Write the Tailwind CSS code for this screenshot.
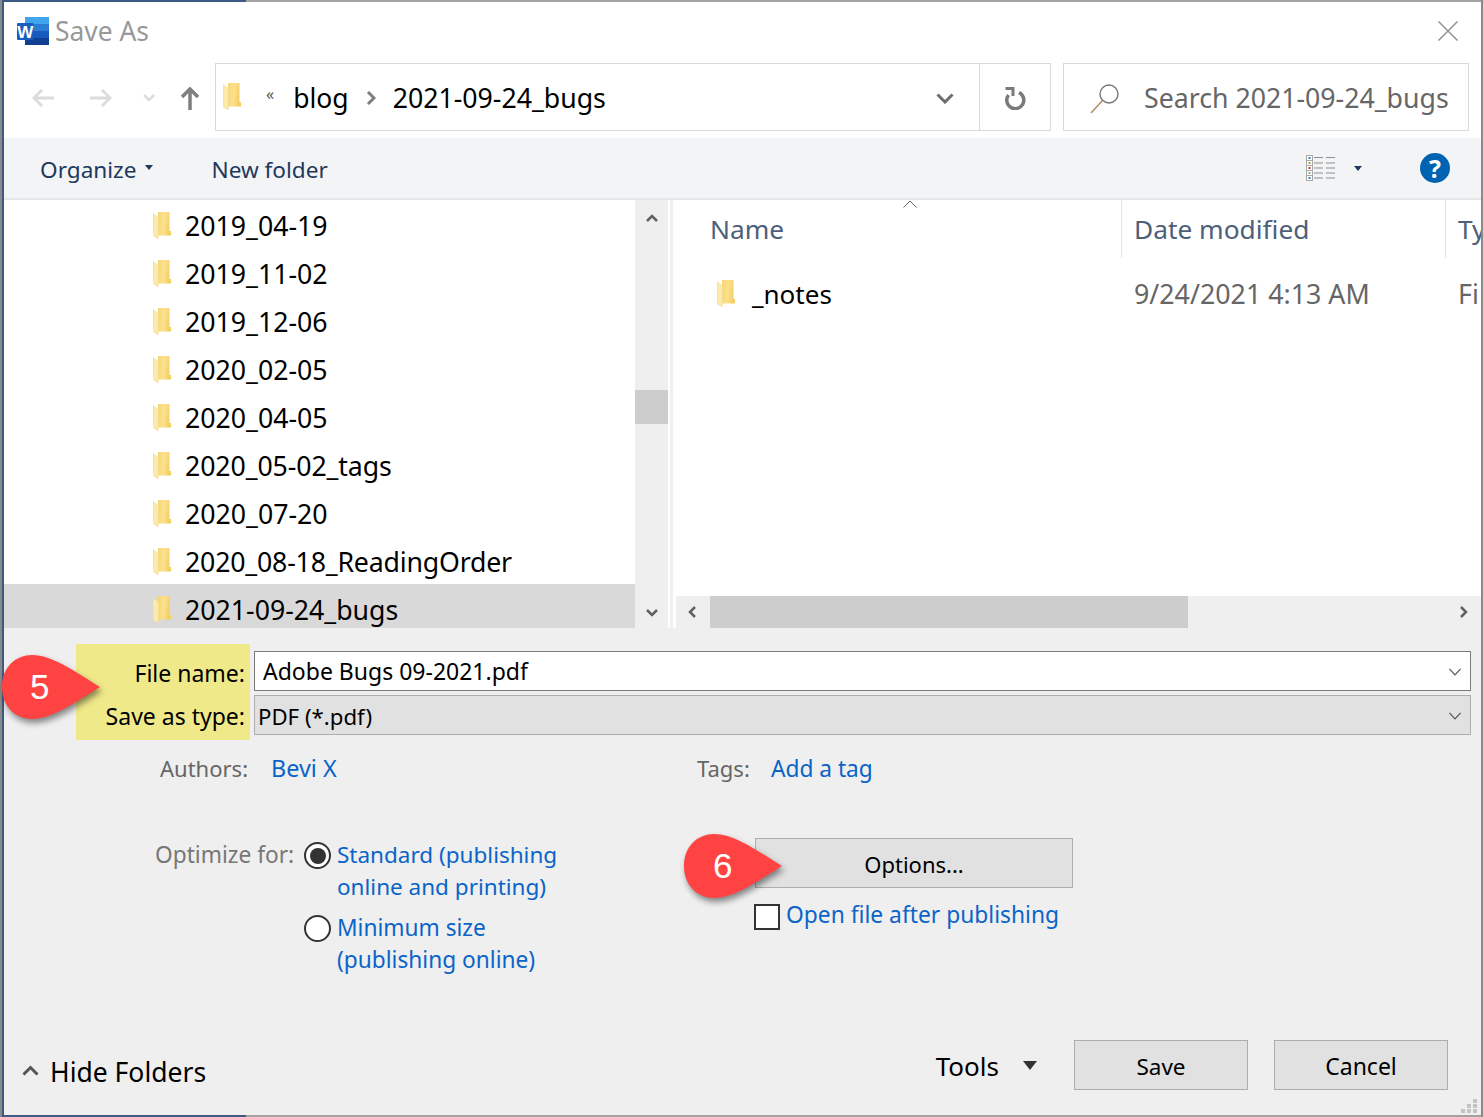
<!DOCTYPE html>
<html lang="en">
<head>
<meta charset="UTF-8">
<title>Save As</title>
<script src="https://cdn.jsdelivr.net/npm/@tailwindcss/browser@4"></script>
</head>
<body class="bg-white">
<svg class="absolute w-0 h-0" width="0" height="0">
  <defs>
    <linearGradient id="fold" x1="0" y1="0" x2="1" y2="0.2">
      <stop offset="0" stop-color="#f8d775"/><stop offset="0.55" stop-color="#fbe08d"/><stop offset="1" stop-color="#f5cd62"/>
    </linearGradient>
    <symbol id="folder" viewBox="0 0 18 27">
      <path d="M5 0H16.500V19H18V23.500H5Z" fill="url(#fold)"/>
      <path d="M0 1.500L5.500 6V23.500L5 27L0 23.500Z" fill="#fdeaa8" stroke="#edd58f" stroke-width="0.5"/>
    </symbol>
    <symbol id="chev-down" viewBox="0 0 16 10"><path d="M1 1L8 8.500L15 1" fill="none" stroke="currentColor" stroke-width="1.500"/></symbol>
  </defs>
</svg>

<div class="relative w-[1483px] h-[1117px] overflow-hidden bg-[#8a8a8a] font-['Noto_Sans',sans-serif] pl-[2px] pr-[2px]">
  <div class="flex flex-col h-full border-l-2 border-[#3d5a85] bg-[#efefef]">
    <!-- top edge -->
    <div class="flex h-[2px] shrink-0"><div class="w-[242px] bg-[#3d5a85]"></div><div class="flex-1 bg-[#a3a3a3]"></div></div>

    <!-- title bar -->
    <div class="flex items-center h-[60px] shrink-0 bg-white pl-[13px] pr-[23px]">
      <svg class="w-[32px] h-[28px] -mt-[2px]" viewBox="0 0 32 28">
        <rect x="8" width="24" height="7" fill="#41a5ee"/>
        <rect x="8" y="7" width="24" height="7" fill="#2b7cd3"/>
        <rect x="8" y="14" width="24" height="7" fill="#185abd"/>
        <rect x="8" y="21" width="24" height="7" fill="#103f91"/>
        <rect y="6" width="16.500" height="17" rx="1" fill="#1a5dbd"/>
        <text x="8.250" y="20.500" font-size="17" font-weight="700" text-anchor="middle" fill="#fff" font-family="Liberation Sans">W</text>
      </svg>
      <span class="ml-[6px] -mt-[2px] text-[26.400px] text-[#999] leading-none">Save As</span>
      <svg class="ml-auto -mt-[2px] w-[20px] h-[20px]" viewBox="0 0 20 20"><path d="M0.500 0.500L19.500 19.500M19.500 0.500L0.500 19.500" stroke="#8c8c8c" stroke-width="1.400"/></svg>
    </div>

    <!-- nav row -->
    <div class="flex items-start h-[76px] shrink-0 bg-white">
      <div class="flex items-center h-[72px] w-[211px] shrink-0 pl-[28px]">
        <svg class="w-[22px] h-[18px]" viewBox="0 0 22 18"><path d="M22 9H2M10 1L2 9L10 17" fill="none" stroke="#dcdcdc" stroke-width="3"/></svg>
        <svg class="ml-[36px] w-[22px] h-[18px]" viewBox="0 0 22 18"><path d="M0 9H20M12 1L20 9L12 17" fill="none" stroke="#dcdcdc" stroke-width="3"/></svg>
        <svg class="ml-[31px] w-[12px] h-[8px]" viewBox="0 0 12 8"><path d="M1 1L6 6L11 1" fill="none" stroke="#dcdcdc" stroke-width="2.500"/></svg>
        <svg class="ml-[26px] w-[18px] h-[23px]" viewBox="0 0 18 23"><path d="M9 23V3M1 10L9 2L17 10" fill="none" stroke="#7f7f7f" stroke-width="3.500"/></svg>
      </div>
      <div class="flex items-center w-[836px] h-[68px] border border-[#d9d9d9] mt-px shrink-0">
        <svg class="ml-[7px] -mt-[1px] w-[18px] h-[27px]"><use href="#folder"/></svg>
        <span class="ml-[25px] text-[16px] leading-none text-[#555] -mt-[6px]">«</span>
        <span class="ml-[19px] mt-[2px] text-[26.500px] text-black leading-none">blog</span>
        <svg class="ml-[17px] w-[10px] h-[14px] mt-[2px]" viewBox="0 0 10 14"><path d="M2 1L8 7L2 13" fill="none" stroke="#7f7f7f" stroke-width="3"/></svg>
        <span class="ml-[17px] mt-[2px] text-[26.700px] text-black leading-none">2021-09-24_bugs</span>
        <svg class="ml-auto mt-[2px] w-[18px] h-[11px] text-[#6d6d6d]" viewBox="0 0 18 11"><path d="M1.500 1.500L9 9L16.500 1.500" fill="none" stroke="currentColor" stroke-width="3"/></svg>
        <div class="flex items-center justify-center ml-[25px] w-[71px] h-full border-l border-[#d9d9d9]">
          <svg class="w-[22px] h-[24px] mt-[1px]" viewBox="0 0 22 24"><path d="M15 6.500A8.500 8.500 0 1 1 4.500 9" fill="none" stroke="#7a7a7a" stroke-width="3.500"/><path d="M1.500 2.500H9V10" fill="none" stroke="#7a7a7a" stroke-width="3"/></svg>
        </div>
      </div>
      <div class="flex items-center ml-[12px] w-[406px] h-[68px] border border-[#d9d9d9] mt-px shrink-0">
        <svg class="ml-[26px] w-[30px] h-[31px] mt-[2px]" viewBox="0 0 30 31"><circle cx="19" cy="11" r="9" fill="none" stroke="#777" stroke-width="1.400"/><path d="M12.500 17.500L1 30" stroke="#b08d66" stroke-width="1.500"/></svg>
        <span class="ml-[24px] mt-[3px] text-[26.700px] text-[#666] leading-none whitespace-nowrap">Search 2021-09-24_bugs</span>
      </div>
    </div>

    <!-- toolbar -->
    <div class="flex items-center h-[62px] shrink-0 bg-[#f3f4f6] border-b-2 border-[#e6e6e6] pl-[36px] text-[22.600px] text-[#1e395b] leading-none">
      <span class="mt-[4px]">Organize</span>
      <svg class="ml-[9px] w-[8px] h-[5px] -mt-[2px]" viewBox="0 0 8 5"><path d="M0 0H8L4 5Z" fill="#1e395b"/></svg>
      <span class="ml-[58px] mt-[4px]">New folder</span>
      <svg class="ml-auto w-[30px] h-[27px]" viewBox="0 0 30 27">
        <g fill="#fff" stroke="#a8a8a8"><rect x="0.500" y="0.500" width="6" height="5"/><rect x="0.500" y="5.500" width="6" height="5"/><rect x="0.500" y="10.500" width="6" height="5"/><rect x="0.500" y="15.500" width="6" height="5"/><rect x="0.500" y="20.500" width="6" height="5"/></g>
        <rect x="2.500" y="2" width="2" height="2" fill="#3b7fc4"/><rect x="2.500" y="7" width="2" height="2" fill="#a89a3a"/><rect x="2.500" y="12" width="2" height="2" fill="#c0392b"/><rect x="2.500" y="17" width="2" height="2" fill="#9a9a9a"/><rect x="2.500" y="22" width="2" height="2" fill="#3b7fc4"/>
        <path d="M8 2.500H17M20 2.500H29M8 8H17M20 8H29M8 13H17M20 13H29M8 18H17M20 18H29M8 23H17M20 23H29" stroke="#8f8f8f"/>
      </svg>
      <svg class="ml-[18px] w-[8px] h-[5px]" viewBox="0 0 8 5"><path d="M0 0H8L4 5Z" fill="#1e395b"/></svg>
      <div class="flex items-center justify-center ml-[58px] mr-[31px] w-[30px] h-[30px] rounded-full bg-[#0063b1] text-white text-[25px] font-bold">?</div>
    </div>

    <!-- panes -->
    <div class="flex h-[428px] shrink-0 bg-white">
      <div class="w-[631px] shrink-0 overflow-hidden pt-[2px] text-[26.700px] text-black">
        <div class="flex items-center h-[48px] pl-[149px]"><svg class="w-[18px] h-[27px] -mt-[2px]"><use href="#folder"/></svg><span class="ml-[14px]">2019_04-19</span></div>
        <div class="flex items-center h-[48px] pl-[149px]"><svg class="w-[18px] h-[27px] -mt-[2px]"><use href="#folder"/></svg><span class="ml-[14px]">2019_11-02</span></div>
        <div class="flex items-center h-[48px] pl-[149px]"><svg class="w-[18px] h-[27px] -mt-[2px]"><use href="#folder"/></svg><span class="ml-[14px]">2019_12-06</span></div>
        <div class="flex items-center h-[48px] pl-[149px]"><svg class="w-[18px] h-[27px] -mt-[2px]"><use href="#folder"/></svg><span class="ml-[14px]">2020_02-05</span></div>
        <div class="flex items-center h-[48px] pl-[149px]"><svg class="w-[18px] h-[27px] -mt-[2px]"><use href="#folder"/></svg><span class="ml-[14px]">2020_04-05</span></div>
        <div class="flex items-center h-[48px] pl-[149px]"><svg class="w-[18px] h-[27px] -mt-[2px]"><use href="#folder"/></svg><span class="ml-[14px] tracking-[-0.100px]">2020_05-02_tags</span></div>
        <div class="flex items-center h-[48px] pl-[149px]"><svg class="w-[18px] h-[27px] -mt-[2px]"><use href="#folder"/></svg><span class="ml-[14px]">2020_07-20</span></div>
        <div class="flex items-center h-[48px] pl-[149px]"><svg class="w-[18px] h-[27px] -mt-[2px]"><use href="#folder"/></svg><span class="ml-[14px] tracking-[-0.180px]">2020_08-18_ReadingOrder</span></div>
        <div class="flex items-center h-[52px] -mt-[2px] pl-[149px] bg-[#d9d9d9]"><svg class="w-[18px] h-[27px] -mt-[2px]"><use href="#folder"/></svg><span class="ml-[14px]">2021-09-24_bugs</span></div>
      </div>
      <!-- tree scrollbar -->
      <div class="flex flex-col w-[33px] shrink-0 bg-[#efefef]">
        <div class="flex items-center justify-center h-[36px]"><svg class="w-[12px] h-[8px]" viewBox="0 0 12 8"><path d="M1 7L6 2L11 7" fill="none" stroke="#606060" stroke-width="2.500"/></svg></div>
        <div class="mt-[154px] h-[34px] bg-[#cdcdcd]"></div>
        <div class="flex items-center justify-center mt-auto h-[30px]"><svg class="w-[12px] h-[8px]" viewBox="0 0 12 8"><path d="M1 1L6 6L11 1" fill="none" stroke="#606060" stroke-width="2.500"/></svg></div>
      </div>
      <div class="ml-[2px] w-[3px] shrink-0 bg-[#f0f0f0]"></div>
      <!-- file list -->
      <div class="relative flex flex-col flex-1 min-w-0 pl-[3px]">
        <svg class="absolute left-[230px] top-0 w-[14px] h-[8px]" viewBox="0 0 14 8"><path d="M0.500 7.500L7 1L13.500 7.500" fill="none" stroke="#666" stroke-width="1"/></svg>
        <div class="flex h-[58px] shrink-0 text-[26.300px] text-[#4c607a] leading-none">
          <div class="flex items-center w-[445px] pl-[34px] pt-[1px] shrink-0">Name</div>
          <div class="flex items-center w-[324px] pl-[12px] pt-[1px] shrink-0 border-l border-[#e5e5e5]">Date modified</div>
          <div class="flex items-center flex-1 pl-[12px] pt-[1px] border-l border-[#e5e5e5] overflow-hidden">Ty</div>
        </div>
        <div class="flex items-center h-[72px] shrink-0 text-[26.800px] leading-none">
          <div class="flex items-center w-[445px] pl-[41px] shrink-0"><svg class="w-[18px] h-[27px] -mt-[2px]"><use href="#folder"/></svg><span class="ml-[17px] text-black text-[26px]">_notes</span></div>
          <div class="w-[324px] pl-[13px] shrink-0 text-[#666] whitespace-nowrap">9/24/2021 4:13 AM</div>
          <div class="pl-[13px] text-[#666]">Fi</div>
        </div>
        <div class="flex items-center mt-auto h-[32px] bg-[#efefef]">
          <svg class="ml-[12px] w-[8px] h-[12px]" viewBox="0 0 8 12"><path d="M7 1L2 6L7 11" fill="none" stroke="#606060" stroke-width="2.500"/></svg>
          <div class="ml-[14px] w-[478px] h-full bg-[#cdcdcd]"></div>
          <svg class="ml-auto mr-[13px] w-[8px] h-[12px]" viewBox="0 0 8 12"><path d="M1 1L6 6L1 11" fill="none" stroke="#606060" stroke-width="2.500"/></svg>
        </div>
      </div>
    </div>

    <!-- form -->
    <div class="flex flex-col flex-1 min-h-0 bg-[#efefef]">
      <div class="flex mt-[16px] ml-[72px] mr-[10px]">
        <div class="flex flex-col w-[174px] h-[96px] bg-[#f0e98a] pr-[5px] items-end text-[23px] text-black leading-none">
          <span class="mt-[18px]">File name:</span>
          <span class="mt-[20px]">Save as type:</span>
        </div>
        <div class="flex flex-col flex-1 ml-[4px] mt-[7px] gap-[4px] text-[23px] text-black leading-none">
          <div class="flex items-center h-[40px] bg-white border border-[#7a7a7a] pl-[8px] pr-[8px] pt-[1px]">Adobe Bugs 09-2021.pdf<svg class="ml-auto w-[14px] h-[8px] text-[#555]"><use href="#chev-down"/></svg></div>
          <div class="flex items-center h-[40px] bg-[#e1e1e1] border border-[#adadad] pl-[3px] pr-[8px] pt-[4px] text-[22.200px]">PDF (*.pdf)<svg class="ml-auto -mt-[3px] w-[14px] h-[8px] text-[#555]"><use href="#chev-down"/></svg></div>
        </div>
      </div>

      <div class="flex items-center mt-[13px] h-[32px] leading-none">
        <span class="ml-[156px] w-[88px] -mt-[2px] text-[22px] text-[#666]">Authors:</span>
        <span class="ml-[23px] w-[426px] text-[23.400px] text-[#0a64c8]">Bevi X</span>
        <span class="w-[52px] -mt-[2px] text-[22px] text-[#666]">Tags:</span>
        <span class="ml-[22px] text-[22.700px] text-[#0a64c8]">Add a tag</span>
      </div>

      <div class="flex mt-[54px] text-[22.700px] leading-[32px]">
        <span class="ml-[151px] w-[140px] text-[#777] whitespace-nowrap">Optimize for:</span>
        <div class="ml-[9px] w-[380px] shrink-0 text-[#0a64c8]">
          <div class="flex gap-[6px]">
            <div class="flex items-center justify-center mt-[3px] w-[27px] h-[27px] rounded-full border-2 border-[#333] bg-white"><div class="w-[16px] h-[16px] rounded-full bg-[#333]"></div></div>
            <span class="text-[22.500px]">Standard (publishing<br>online and printing)</span>
          </div>
          <div class="flex gap-[6px] mt-[9px]">
            <div class="mt-[3px] w-[27px] h-[27px] rounded-full border-2 border-[#333] bg-white"></div>
            <span>Minimum size<br>(publishing online)</span>
          </div>
        </div>
        <div class="flex flex-col ml-[70px] -mt-[1px]">
          <div class="flex items-center justify-center pt-[2px] ml-[1px] w-[318px] h-[50px] bg-[#e1e1e1] border border-[#adadad] text-[22px] text-black">Options...</div>
          <div class="flex items-start mt-[16px]">
            <div class="w-[26px] h-[26px] border-2 border-[#333] bg-white"></div>
            <span class="ml-[6px] -mt-[2px] leading-[26px] text-[22.800px] text-[#0a64c8]">Open file after publishing</span>
          </div>
        </div>
      </div>

      <!-- footer -->
      <div class="flex items-center mt-auto mb-[25px] h-[50px] text-black">
        <svg class="ml-[18px] mt-[10px] w-[17px] h-[11px]" viewBox="0 0 17 11"><path d="M1.500 9.500L8.500 2.500L15.500 9.500" fill="none" stroke="#555" stroke-width="3"/></svg>
        <span class="ml-[11px] text-[26.500px] leading-none mt-[15px]">Hide Folders</span>
        <span class="ml-auto text-[26px] leading-none mt-[2px]">Tools</span>
        <svg class="ml-[24px] w-[14px] h-[9px]" viewBox="0 0 14 9"><path d="M0 0H14L7 9Z" fill="#333"/></svg>
        <div class="flex items-center justify-center pt-[3px] ml-[37px] w-[174px] h-[50px] bg-[#e1e1e1] border border-[#adadad] text-[22.500px]">Save</div>
        <div class="flex items-center justify-center pt-[3px] ml-[26px] mr-[33px] w-[174px] h-[50px] bg-[#e1e1e1] border border-[#adadad] text-[23px]">Cancel</div>
      </div>
    </div>
    <div class="flex h-[2px] shrink-0"><div class="w-[242px] bg-[#3d5a85]"></div><div class="flex-1 bg-[#a3a3a3]"></div></div>
  </div>

  <!-- resize grip -->
  <svg class="absolute left-[1460px] top-[1099px] w-[18px] h-[14px]" viewBox="0 0 18 14">
    <g fill="#c4c4c4"><rect x="13" y="0" width="4" height="4"/><rect x="7" y="5" width="4" height="4"/><rect x="13" y="5" width="4" height="4"/><rect x="1" y="10" width="4" height="4"/><rect x="7" y="10" width="4" height="4"/><rect x="13" y="10" width="4" height="4"/></g>
  </svg>

  <!-- callouts -->
  <div class="absolute left-[2px] top-[655px] w-[98px] h-[64px]">
    <svg class="absolute inset-0 w-full h-full overflow-visible drop-shadow-[2px_4px_3px_rgba(0,0,0,0.45)]" viewBox="0 0 98 64"><path d="M0 32C0 12 14 0 30 0C50 0 72 16 98 32C72 48 50 64 30 64C14 64 0 52 0 32Z" fill="#ff4343"/></svg>
    <span class="absolute left-[28px] top-[12px] text-[35px] leading-[40px] text-white font-['Liberation_Sans',sans-serif]">5</span>
  </div>
  <div class="absolute left-[684px] top-[834px] w-[98px] h-[64px]">
    <svg class="absolute inset-0 w-full h-full overflow-visible drop-shadow-[2px_4px_3px_rgba(0,0,0,0.45)]" viewBox="0 0 98 64"><path d="M0 32C0 12 14 0 30 0C50 0 72 16 98 32C72 48 50 64 30 64C14 64 0 52 0 32Z" fill="#ff4343"/></svg>
    <span class="absolute left-[29px] top-[12px] text-[35px] leading-[40px] text-white font-['Liberation_Sans',sans-serif]">6</span>
  </div>
</div>
</body>
</html>
